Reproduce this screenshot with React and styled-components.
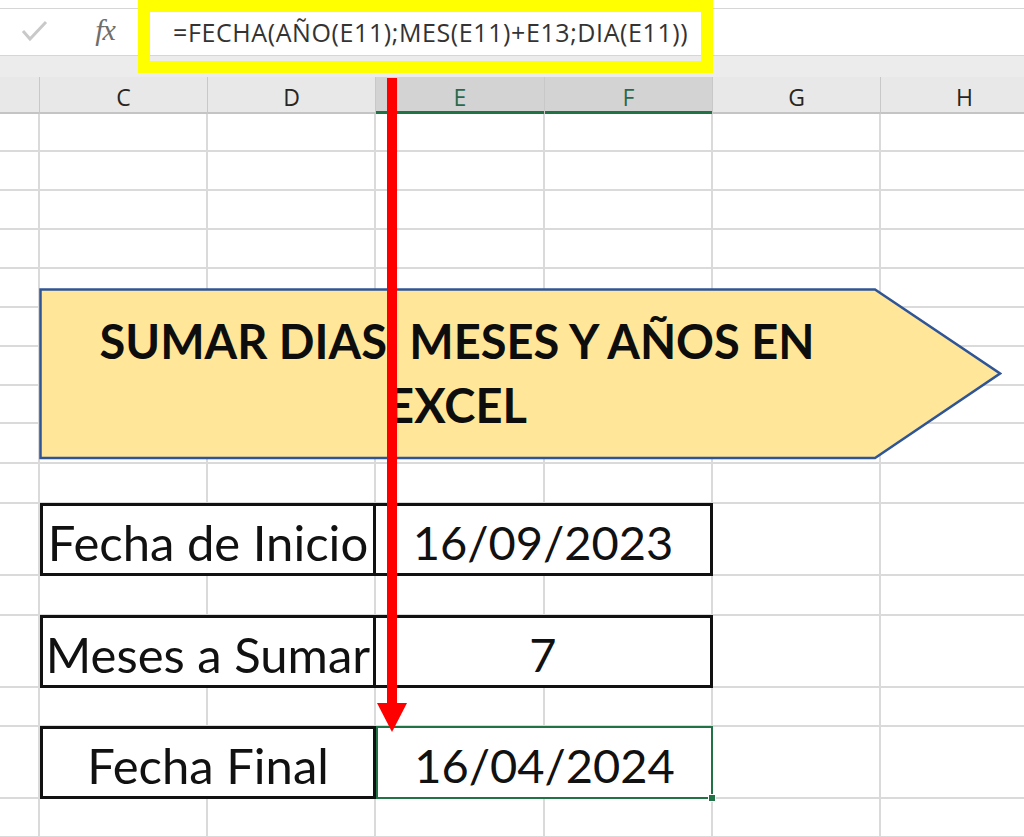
import React from "react";
import styled, { createGlobalStyle } from "styled-components";

const GlobalStyle = createGlobalStyle`
  html, body {
    margin: 0;
    padding: 0;
    background: #ffffff;
    overflow: hidden;
  }
  * {
    box-sizing: border-box;
  }
`;

const COLS = "40px 168px 168px 169px 168px 168px 168px";
const GRID_LINE = "#dadada";
const EXCEL_GREEN = "#217346";

// heights of sheet rows, top to bottom
const rowHeights = [38, 39, 39, 39, 39, 39, 39, 38, 40, 40, 72, 40, 72, 39, 72, 39];

const tableRows = {
  10: { label: "Fecha de Inicio", value: "16/09/2023" },
  12: { label: "Meses a Sumar", value: "7" },
  14: { label: "Fecha Final", value: "16/04/2024", selected: true },
};

const Page = styled.div`
  position: relative;
  width: 1024px;
  height: 837px;
  overflow: hidden;
  background: #ffffff;
  font-family: "Open Sans", "Noto Sans", sans-serif;
`;

const FormulaBar = styled.div`
  margin-top: 8px;
  height: 48px;
  display: flex;
  align-items: center;
  border-top: 1px solid #d6d6d6;
  border-bottom: 1px solid #d6d6d6;
  background: #ffffff;
`;

const BarButton = styled.div`
  width: ${(p) => p.$w}px;
  height: 100%;
  display: flex;
  align-items: center;
  justify-content: center;
`;

const Fx = styled.span`
  font-family: "Liberation Serif", "DejaVu Serif", serif;
  font-style: italic;
  font-size: 30px;
  color: #6e6e6e;
  letter-spacing: -1px;
  margin-top: -4px;
`;

const FormulaInput = styled.div`
  flex: 1;
  height: 100%;
  display: flex;
  align-items: center;
  padding-left: 33px;
  font-family: "Open Sans", "Noto Sans", sans-serif;
  font-size: 25px;
  color: #333333;
  letter-spacing: 0.6px;
  white-space: nowrap;
`;

const Strip = styled.div`
  height: 21px;
  background: #ececec;
`;

const HeaderRow = styled.div`
  display: grid;
  grid-template-columns: ${COLS};
  height: 37px;
  background: #e8e8e8;
  border-bottom: 2px solid #c4c4c4;
`;

const HeaderCell = styled.div`
  display: flex;
  align-items: center;
  justify-content: center;
  font-size: 23px;
  color: ${(p) => (p.$active ? "#2a6a4c" : "#262626")};
  background: ${(p) => (p.$active ? "#d3d3d3" : "transparent")};
  border-right: 1px solid #c8c8c8;
  box-shadow: ${(p) => (p.$active ? `inset 0 -3px 0 ${EXCEL_GREEN}` : "none")};
  margin-bottom: -2px;
  padding-top: 2px;
`;

const Sheet = styled.div`
  display: grid;
  grid-template-columns: ${COLS};
  grid-template-rows: ${rowHeights.map((h) => h + "px").join(" ")};
`;

const Cell = styled.div`
  border-right: 2px solid ${GRID_LINE};
  border-bottom: 2px solid ${GRID_LINE};
`;

const BoxCell = styled.div`
  position: relative;
  grid-column: span 2;
  display: flex;
  align-items: center;
  justify-content: center;
  margin-top: -1px;
  border: ${(p) => (p.$selected ? `2px solid ${EXCEL_GREEN}` : "3px solid #111111")};
  ${(p) => (p.$joined ? "border-left: none;" : "")}
  font-family: Lato, "Open Sans", sans-serif;
  font-size: ${(p) => p.$size}px;
  color: #111111;
  white-space: nowrap;
  padding-top: 4px;
`;

const Handle = styled.span`
  position: absolute;
  right: -5px;
  bottom: -5px;
  width: 8px;
  height: 8px;
  background: ${EXCEL_GREEN};
  border: 1px solid #ffffff;
`;

const Highlight = styled.div`
  position: absolute;
  left: 138px;
  top: 0;
  width: 575px;
  height: 73px;
  border: 12px solid #ffff00;
  pointer-events: none;
`;

const Banner = styled.div`
  position: absolute;
  left: 39px;
  top: 288px;
  width: 963px;
  height: 172px;
`;

const BannerShape = styled.svg`
  position: absolute;
  inset: 0;
`;

const BannerText = styled.div`
  position: relative;
  width: 836px;
  padding-top: 21px;
  text-align: center;
  font-family: Lato, "Open Sans", sans-serif;
  font-weight: 700;
  font-size: 47px;
  line-height: 64px;
  color: #0d0d0d;
  white-space: nowrap;
`;

const Arrow = styled.svg`
  position: absolute;
  left: 376px;
  top: 78px;
`;

function CheckIcon() {
  return (
    <svg width="30" height="24" viewBox="0 0 30 24">
      <polyline points="3,11 10,19 26,2" fill="none" stroke="#c9c9c9" strokeWidth="3" />
    </svg>
  );
}

export default function App() {
  const letters = ["", "C", "D", "E", "F", "G", "H"];

  return (
    <Page>
      <GlobalStyle />
      <FormulaBar>
        <BarButton $w={70}>
          <CheckIcon />
        </BarButton>
        <BarButton $w={70}>
          <Fx>fx</Fx>
        </BarButton>
        <FormulaInput>=FECHA(AÑO(E11);MES(E11)+E13;DIA(E11))</FormulaInput>
      </FormulaBar>
      <Strip />
      <HeaderRow>
        {letters.map((l, i) => (
          <HeaderCell key={i} $active={l === "E" || l === "F"}>
            {l}
          </HeaderCell>
        ))}
      </HeaderRow>
      <Sheet>
        {rowHeights.map((h, r) => {
          const t = tableRows[r];
          if (!t) {
            return letters.map((_, c) => <Cell key={r + "-" + c} />);
          }
          return (
            <React.Fragment key={r}>
              <Cell />
              <BoxCell $size={49}>{t.label}</BoxCell>
              <BoxCell $size={47} $joined={!t.selected} $selected={t.selected}>
                {t.value}
                {t.selected && <Handle />}
              </BoxCell>
              <Cell />
              <Cell />
            </React.Fragment>
          );
        })}
      </Sheet>

      <Highlight />

      <Banner>
        <BannerShape width="963" height="172" viewBox="0 0 963 172">
          <polygon
            points="1.5,1.5 836,1.5 961,85.5 836,170 1.5,170"
            fill="#ffe699"
            stroke="#2f5597"
            strokeWidth="2.5"
          />
        </BannerShape>
        <BannerText>
          SUMAR DIAS, MESES Y AÑOS EN
          <br />
          EXCEL
        </BannerText>
      </Banner>

      <Arrow width="32" height="656" viewBox="0 0 32 656">
        <rect x="11" y="0" width="10" height="628" fill="#ff0000" />
        <polygon points="1,625 31,625 16,654" fill="#ff0000" />
      </Arrow>
    </Page>
  );
}
